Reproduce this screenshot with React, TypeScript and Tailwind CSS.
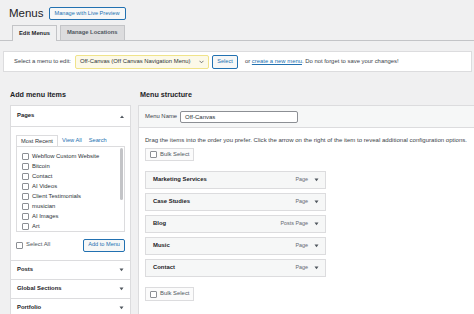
import React from "react";

const Check = () => (
  <span className="inline-block w-[7px] h-[7px] border border-[#8c8f94] bg-white rounded-[1px] shrink-0" />
);

const pages = [
  "Webflow Custom Website",
  "Bitcoin",
  "Contact",
  "AI Videos",
  "Client Testimonials",
  "musician",
  "AI Images",
  "Art",
];

const items: [string, string][] = [
  ["Marketing Services", "Page"],
  ["Case Studies", "Page"],
  ["Blog", "Posts Page"],
  ["Music", "Page"],
  ["Contact", "Page"],
];

const Caret = () => (
  <svg width="5" height="4" viewBox="0 0 5 4" className="shrink-0">
    <path d="M0.5 0.5 L4.5 0.5 L2.5 3.2 Z" fill="#50575e" />
  </svg>
);

export default function App() {
  return (
    <div
      className="w-[474px] h-[314px] overflow-hidden bg-[#f0f0f1] text-[#3c434a] text-[5.9px] leading-none"
      style={{ fontFamily: '"Liberation Sans", Arial, sans-serif' }}
    >
      {/* title */}
      <div className="flex items-center pl-[9px] pt-[7px] gap-[5px] h-[20px]">
        <h1 className="text-[11.5px] text-[#1d2327] leading-none">Menus</h1>
        <button className="h-[13px] px-[5px] border border-[#2271b1] text-[#2271b1] bg-[#f6f7f7] rounded-[2px] text-[5.6px]">
          Manage with Live Preview
        </button>
      </div>
      {/* tabs */}
      <div className="mt-[5px] flex items-end gap-[3px] pl-[12px] border-b border-[#c3c4c7] h-[16px]">
        <div className="h-[16px] px-[6px] flex items-center border border-b-0 border-[#c3c4c7] bg-[#f0f0f1] font-bold text-[#1d2327] text-[5.8px] -mb-px">
          Edit Menus
        </div>
        <div className="h-[15px] px-[6px] flex items-center border border-b-0 border-[#c3c4c7] bg-[#dcdcde] font-bold text-[#50575e] text-[5.8px]">
          Manage Locations
        </div>
      </div>
      {/* select bar */}
      <div className="mt-[10px] ml-[3px] w-[469px] h-[21px] bg-white border border-[#dcdcde] flex items-center pl-[10px] gap-[3px]">
        <span className="text-[#3c434a]">Select a menu to edit:</span>
        <div className="ml-[1px] h-[14px] w-[134px] bg-[#fcf9e8] border border-[#f0e38a] rounded-[2px] flex items-center justify-between px-[4px] text-[#2c3338]">
          <span>Off-Canvas (Off Canvas Navigation Menu)</span>
          <svg width="5" height="4" viewBox="0 0 5 4">
            <path d="M0.5 0.8 L2.5 2.8 L4.5 0.8" fill="none" stroke="#50575e" strokeWidth="0.8" />
          </svg>
        </div>
        <button className="h-[14px] w-[26px] border border-[#2271b1] text-[#2271b1] bg-[#f6f7f7] rounded-[2px] text-[5.6px]">
          Select
        </button>
        <span className="ml-[4px]">
          or <span className="text-[#2271b1] underline">create a new menu</span>. Do not forget to save your changes!
        </span>
      </div>
      {/* columns */}
      <div className="flex pt-[17px]">
        {/* left */}
        <div className="ml-[10px] w-[121px] shrink-0">
          <h2 className="h-[11px] text-[7.2px] font-bold text-[#1d2327] leading-[11px]">Add menu items</h2>
          <div className="mt-[5px] bg-white border border-[#dcdcde]">
            <div className="h-[21px] flex items-center justify-between px-[6px] border-b border-[#dcdcde] font-bold text-[#1d2327]">
              <span>Pages</span>
              <svg width="4" height="3" viewBox="0 0 4 3">
                <path d="M0 3 L4 3 L2 0.5 Z" fill="#50575e" />
              </svg>
            </div>
            <div className="px-[5px] pt-[7px]">
              <div className="flex items-end h-[12px] text-[5.7px]">
                <div className="h-[12px] px-[4px] flex items-center border border-b-0 border-[#dcdcde] text-[#2c3338] -mb-px bg-white relative">
                  Most Recent
                </div>
                <div className="px-[4px] text-[#2271b1] h-[11px] flex items-center">View All</div>
                <div className="px-[3px] text-[#2271b1] h-[11px] flex items-center">Search</div>
              </div>
              <div className="h-[86px] border border-[#dcdcde] relative pl-[5px] pt-[6px] flex flex-col gap-[3px]">
                {pages.map((p) => (
                  <div key={p} className="flex items-center gap-[3px] h-[7px] text-[#2c3338]">
                    <Check />
                    <span>{p}</span>
                  </div>
                ))}
                <div className="absolute right-[1px] top-[1px] w-[3px] h-[52px] bg-[#c3c4c7] rounded-[2px]" />
              </div>
              <div className="flex items-center justify-between h-[18px] mt-[4px] mb-[6px]">
                <div className="flex items-center gap-[3px] text-[#50575e]">
                  <Check />
                  <span>Select All</span>
                </div>
                <button className="h-[13px] px-[4px] border border-[#2271b1] text-[#2271b1] bg-[#f6f7f7] rounded-[2px] text-[5.6px]">
                  Add to Menu
                </button>
              </div>
            </div>
            {["Posts", "Global Sections", "Portfolio"].map((s) => (
              <div
                key={s}
                className="h-[19px] flex items-center justify-between px-[6px] border-t border-[#dcdcde] font-bold text-[#1d2327]"
              >
                <span>{s}</span>
                <Caret />
              </div>
            ))}
          </div>
        </div>
        {/* right */}
        <div className="ml-[7px] flex-1 min-w-0">
          <h2 className="h-[11px] text-[7.2px] font-bold text-[#1d2327] leading-[11px] pl-[2px]">Menu structure</h2>
          <div className="mt-[5px] border border-r-0 border-[#dcdcde] bg-white h-[210px]">
            <div className="h-[22px] bg-[#f6f7f7] border-b border-[#dcdcde] flex items-center px-[6px] gap-[3px]">
              <span className="text-[#3c434a]">Menu Name</span>
              <div className="h-[12px] w-[118px] bg-white border border-[#8c8f94] rounded-[2px] flex items-center px-[4px] text-[#2c3338] text-[6px]">
                Off-Canvas
              </div>
            </div>
            <div className="px-[6px] pt-[9px]">
              <p className="text-[#3c434a] text-[6.05px] whitespace-nowrap">
                Drag the items into the order you prefer. Click the arrow on the right of the item to reveal additional configuration options.
              </p>
              <div className="mt-[5px] w-[49px] h-[13px] border border-[#dcdcde] bg-[#fbfbfb] flex items-center gap-[3px] pl-[4px] text-[#50575e]">
                <Check />
                <span>Bulk Select</span>
              </div>
              <div className="mt-[10px] flex flex-col gap-[4px] w-[181px]">
                {items.map(([n, t]) => (
                  <div
                    key={n}
                    className="h-[18px] bg-[#f6f7f7] border border-[#dcdcde] flex items-center justify-between pl-[7px] pr-[6px]"
                  >
                    <span className="font-bold text-[#1d2327]">{n}</span>
                    <span className="flex items-center gap-[6px] text-[#646970] text-[5.4px]">
                      {t}
                      <Caret />
                    </span>
                  </div>
                ))}
              </div>
              <div className="mt-[10px] w-[49px] h-[14px] border border-[#dcdcde] bg-[#fbfbfb] flex items-center gap-[3px] pl-[4px] text-[#50575e]">
                <Check />
                <span>Bulk Select</span>
              </div>
            </div>
          </div>
        </div>
      </div>
    </div>
  );
}
